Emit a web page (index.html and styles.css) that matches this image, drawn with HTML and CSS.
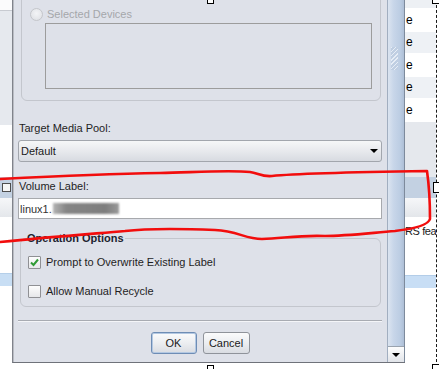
FILE: index.html
```html
<!DOCTYPE html>
<html>
<head>
<meta charset="utf-8">
<title>Label Media</title>
<link rel="stylesheet" href="styles.css">
</head>
<body>
<div class="desk">
  <div class="lstrip">
    <div class="l-top"></div>
    <div class="l-gray"></div>
    <div class="l-white"></div>
    <div class="l-sel"><span class="lchk"></span></div>
    <div class="l-grad"></div>
    <div class="l-white2"></div>
    <div class="l-blue"></div>
  </div>

  <div class="dialog">
    <div class="content">
      <div class="grp grp1">
        <div class="radio-row"><span class="radio"></span><span class="dis">Selected Devices</span></div>
        <div class="listbox"></div>
      </div>
      <div class="lbl">Target Media Pool:</div>
      <div class="combo"><span>Default</span><span class="arrow"></span></div>
      <div class="lbl lbl2">Volume Label:</div>
      <div class="field">linux1.<span class="blur"></span></div>
      <fieldset class="grp2">
        <legend>Operation Options</legend>
        <div class="chk-row"><span class="chk"><svg width="11" height="11" viewBox="0 0 11 11"><path d="M2 5.5 L4.5 8 L9 2.5" fill="none" stroke="#2f9b35" stroke-width="2"/></svg></span>Prompt to Overwrite Existing Label</div>
        <div class="chk-row r2"><span class="chk"></span>Allow Manual Recycle</div>
      </fieldset>
      <div class="sep"></div>
      <div class="btns"><button class="btn ok">OK</button><button class="btn cancel">Cancel</button></div>
    </div>
    <div class="vscroll">
      <div class="thumb"><div class="grip"></div></div>
      <div class="sbtn"><span class="tri"></span></div>
    </div>
  </div>

  <div class="rstrip">
    <div class="rlist">
      <div class="r r-top"></div>
      <div class="r r-w">e</div>
      <div class="r r-l">e</div>
      <div class="r r-w">e</div>
      <div class="r r-l">e</div>
      <div class="r r-w">e</div>
      <div class="r r-gray"></div>
      <div class="r r-sel"></div>
      <div class="r r-grad"></div>
      <div class="r r-txt">RS fea</div>
      <div class="r r-blue"></div>
    </div>
  </div>
</div>

<div class="handle h-tc"></div>
<div class="handle h-tr"></div>
<div class="handle h-mr"></div>
<div class="handle h-bc"></div>
<div class="handle h-br"></div>

<svg class="ink" width="439" height="369" viewBox="0 0 439 369">
  <path d="M0 179 C40 177 100 174 160 173 C200 172 230 170 250 172 C258 173 262 177 272 176 C300 173 360 172 427 171 C429 185 430 205 430 219 C428 226 412 229 395 231 C370 233 345 236 325 236 C300 235 285 238 262 239 C245 239 238 231 215 230 C190 229 150 228 125 231 C90 234 50 237 0 242"
        fill="none" stroke="#f20d0d" stroke-width="2.6" stroke-linecap="round" stroke-linejoin="round"/>
</svg>
</body>
</html>
```

FILE: styles.css
```css
html, body {
  margin: 0;
  padding: 0;
}
body {
  width: 439px;
  height: 369px;
  overflow: hidden;
  position: relative;
  background: #ffffff;
  font-family: "Liberation Sans", Arial, sans-serif;
  font-size: 11px;
  color: #222;
}
.desk {
  display: flex;
  align-items: flex-start;
  height: 369px;
}

/* left background strip */
.lstrip {
  width: 12px;
  flex: none;
  display: flex;
  flex-direction: column;
}
.l-top { height: 10px; background: #fbfbfc; border-bottom: 1px solid #c8cbd1; }
.l-gray { height: 114px; background: #e6e9ee; }
.l-white { height: 52px; background: #ffffff; }
.l-sel { height: 21px; background: #c4d2e3; display: flex; align-items: center; }
.lchk { width: 7px; height: 7px; border: 1px solid #4d4d4d; background: #f6f6f6; margin-left: 2px; }
.l-grad { height: 19px; background: linear-gradient(#f6f7f9, #e4e7eb); }
.l-white2 { height: 56px; background: #ffffff; }
.l-blue { height: 12px; background: #c8def4; border-top: 1px solid #b5cfe9; }

/* dialog */
.dialog {
  flex: none;
  width: 393px;
  height: 363px;
  box-sizing: border-box;
  border-left: 1px solid #80838b;
  border-bottom: 1px solid #6f727a;
  background: #dee1e9;
  display: flex;
  box-shadow: inset 1px 0 0 #b9bcc3;
}
.content {
  flex: 1;
  min-width: 0;
  overflow: hidden;
}
.grp1 {
  margin: -10px 6px 0 8px;
  border: 1px solid #c3c6cd;
  border-radius: 6px;
  padding: 17px 8px 11px 8px;
}
.radio-row {
  display: flex;
  align-items: center;
  height: 13px;
  gap: 4px;
}
.radio {
  width: 13px;
  height: 13px;
  box-sizing: border-box;
  border-radius: 50%;
  border: 1px solid #c4c6cb;
  background: radial-gradient(circle at 50% 40%, #f3f4f6, #dcdee3);
}
.dis { color: #a5a7ab; line-height: 13px; }
.listbox {
  margin: 2px 0 0 15px;
  height: 66px;
  box-sizing: border-box;
  border: 1px solid #9c9c9c;
}
.lbl {
  padding-left: 6px;
  line-height: 14px;
  margin-top: 20px;
  color: #1e1e1e;
}
.lbl2 { margin-top: 17px; }
.combo {
  margin: 5px 5px 0 5px;
  height: 22px;
  box-sizing: border-box;
  border: 1px solid #a2a6ad;
  border-radius: 3px;
  background: linear-gradient(#f6f7f8, #e6e8ec 55%, #d8dbe1);
  display: flex;
  align-items: center;
  justify-content: space-between;
  padding: 0 3px 0 2px;
  color: #1a1a1a;
}
.arrow {
  width: 0;
  height: 0;
  border-left: 4px solid transparent;
  border-right: 4px solid transparent;
  border-top: 4px solid #000;
}
.field {
  margin: 5px 5px 0 5px;
  height: 21px;
  box-sizing: border-box;
  border: 1px solid #a7a9ad;
  background: #ffffff;
  padding-left: 1px;
  display: flex;
  align-items: center;
  color: #333;
}
.blur {
  display: inline-block;
  width: 66px;
  height: 11px;
  margin-left: 1px;
  background: linear-gradient(to right, #b4b4b4, #858585 20%, #7e7e7e 80%, #9a9a9a);
  filter: blur(0.8px);
}
.grp2 {
  margin: 12px 6px 0 7px;
  border: 1px solid #c3c6cd;
  border-radius: 6px;
  padding: 0 6px 7px 7px;
  min-width: 0;
}
.grp2 legend {
  padding: 0 1px;
  margin-left: -2px;
  font-weight: bold;
  color: #1d2430;
  line-height: 14px;
}
.chk-row {
  display: flex;
  align-items: center;
  height: 16px;
  gap: 5px;
  margin-top: 9px;
  color: #1e1e1e;
}
.chk-row.r2 { margin-top: 13px; }
.chk {
  width: 13px;
  height: 13px;
  box-sizing: border-box;
  border: 1px solid #8f9094;
  border-radius: 1px;
  background: linear-gradient(#fdfdfd, #e6e7ea);
  display: flex;
  align-items: center;
  justify-content: center;
}
.sep {
  margin: 13px 5px 0 5px;
  border-top: 1px solid #a8abb2;
  border-bottom: 1px solid #f4f5f8;
}
.btns {
  display: flex;
  justify-content: center;
  gap: 6px;
  margin-top: 10px;
}
.btn {
  height: 22px;
  padding: 0;
  font-family: "Liberation Sans", Arial, sans-serif;
  font-size: 11px;
  color: #1a1a1a;
  border: 1px solid #8f939a;
  border-radius: 3px;
  background: linear-gradient(#fbfbfc, #eceef1 50%, #d9dce2);
}
.btn.ok {
  width: 46px;
  border-color: #6e8db5;
  box-shadow: inset 0 0 0 1px #b3c8e2;
}
.btn.cancel { width: 47px; }

/* scrollbar */
.vscroll {
  flex: none;
  width: 16px;
  border-left: 1px solid #a1aec0;
  border-right: 1px solid #7d8a9c;
  display: flex;
  flex-direction: column;
}
.thumb {
  flex: 1;
  background: linear-gradient(to right, #dbe4f0, #c8d6e9 35%, #bccde3 75%, #aebfd6);
}
.grip {
  margin: 47px 0 0 3px;
  width: 7px;
  height: 23px;
  background: repeating-linear-gradient(135deg, #e6edf6 0 1px, #bfcee2 1px 3px);
}
.sbtn {
  height: 16px;
  box-sizing: border-box;
  border-top: 1px solid #9aa3ae;
  background: linear-gradient(#fdfdfd, #e1e4e9);
  display: flex;
  align-items: center;
  justify-content: center;
}
.tri {
  width: 0;
  height: 0;
  border-left: 4px solid transparent;
  border-right: 4px solid transparent;
  border-top: 4px solid #000;
}

/* right background strip */
.rstrip {
  flex: none;
  width: 34px;
}
.rlist {
  width: 31px;
  height: 362px;
  border-right: 1px dashed #1a1a1a;
  display: flex;
  flex-direction: column;
  overflow: hidden;
}
.r {
  flex: none;
  font-size: 12px;
  color: #000;
  padding-left: 1px;
  white-space: nowrap;
  overflow: hidden;
}
.r-top { height: 8px; background: #edf0f4; }
.r-w { height: 24px; line-height: 24px; background: #ffffff; }
.r-l { height: 21px; line-height: 21px; background: #eef1f5; }
.r-gray { height: 55px; background: #e5e8ed; }
.r-sel { height: 21px; background: #c3d1e2; }
.r-grad { height: 19px; background: linear-gradient(#f6f7f9, #e3e6ea); }
.r-txt {
  height: 51px;
  padding: 7px 0 0 0;
  line-height: 14px;
  font-size: 11px;
  letter-spacing: -0.4px;
  background: #ffffff;
  color: #222;
}
.r-blue { height: 12px; background: #c8def5; border-top: 1px solid #b3cde8; }

/* selection handles of the capture tool */
.handle {
  position: absolute;
  background: #ffffff;
  border: 1px solid #000;
}
.h-tc { left: 207px; top: -3px; width: 5px; height: 5px; }
.h-tr { left: 432px; top: -3px; width: 6px; height: 5px; }
.h-mr { left: 433px; top: 182px; width: 6px; height: 9px; }
.h-bc { left: 207px; top: 365px; width: 5px; height: 6px; }
.h-br { left: 432px; top: 364px; width: 6px; height: 6px; }

.ink {
  position: absolute;
  left: 0;
  top: 0;
  pointer-events: none;
}
```
